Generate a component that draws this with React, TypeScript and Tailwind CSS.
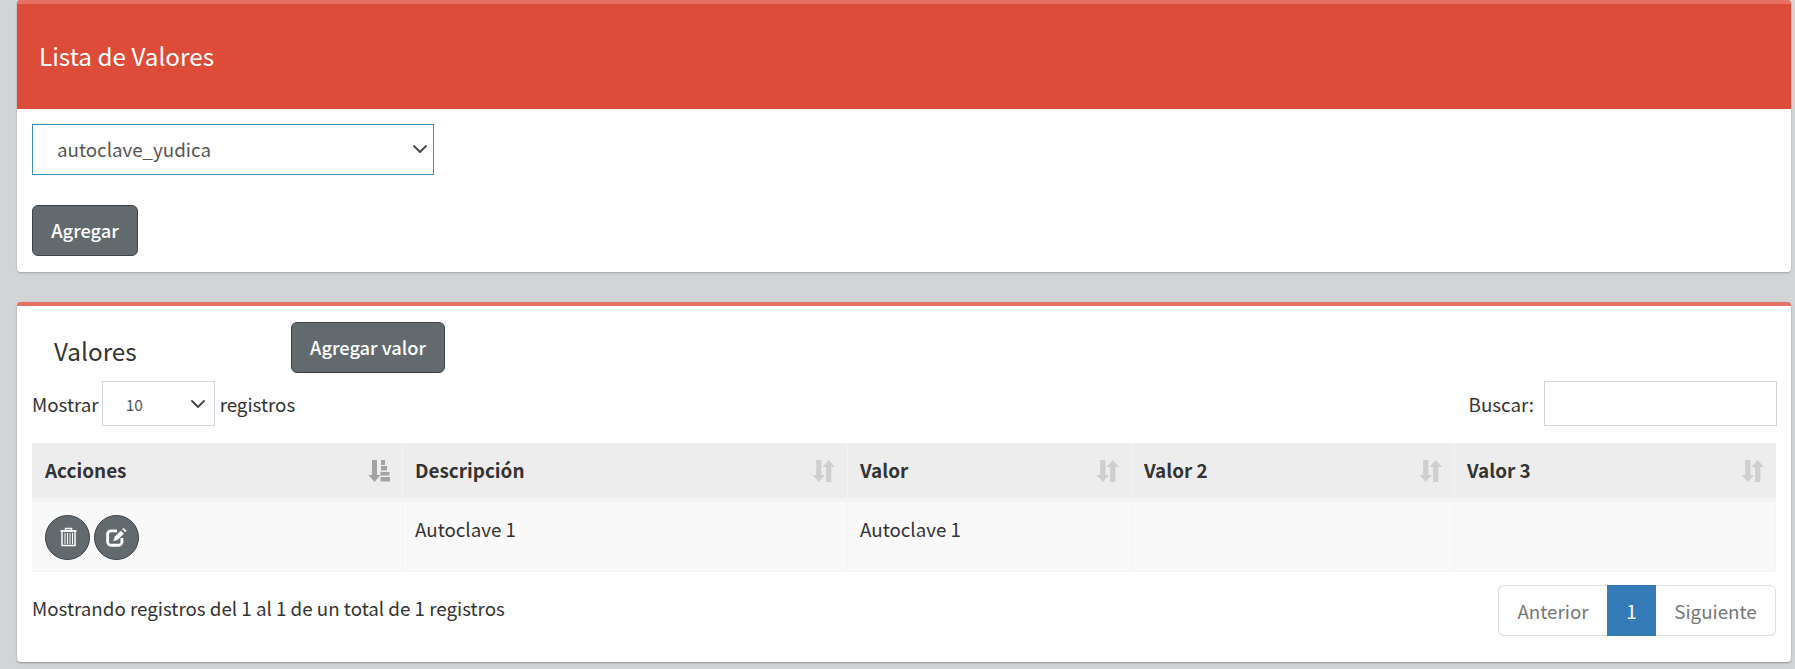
import { ChevronDown } from 'lucide-react';

const FONT = "font-['Noto_Sans_CJK_JP','Source_Sans_Pro',sans-serif]";

function SortBoth() {
  return (
    <svg width="23" height="24" viewBox="0 0 22 24" preserveAspectRatio="none" className="text-[#cfcfcf]" fill="currentColor">
      <path d="M4 1h5v15h3.5L6.5 23 .5 16H4z" />
      <path d="M16 1l6 7h-3.500v15h-5V8H10z" />
    </svg>
  );
}

function SortAsc() {
  return (
    <svg width="22" height="24" viewBox="0 0 22 24" className="text-[#a3a3a3]" fill="currentColor">
      <path d="M4 1h5v15h3.500L6.500 23 .5 16H4z" />
      <rect x="13" y="1" width="4" height="5" />
      <rect x="13" y="7" width="6" height="4.500" />
      <rect x="12.500" y="13" width="9" height="3.500" />
      <rect x="12.500" y="18" width="9.500" height="4.500" />
    </svg>
  );
}

function TrashIcon() {
  return (
    <svg width="17" height="20" viewBox="0 0 17 20" fill="none" stroke="white" className="ml-[2px]">
      <path d="M0.500 4h16" strokeWidth="2" />
      <path d="M5.500 3.500V1.500h6v2" strokeWidth="1.500" />
      <path d="M2 5v13.500h13V5" strokeWidth="1.500" />
      <path d="M5 6v11M7.500 6v11M10 6v11M12.500 6v11" strokeWidth="1" />
    </svg>
  );
}

function EditIcon() {
  return (
    <svg width="22" height="21" viewBox="0 0 20 19" fill="none" stroke="white" className="ml-[1px]">
      <path d="M10 3.500H4.500a3 3 0 0 0-3 3v7a3 3 0 0 0 3 3h7a3 3 0 0 0 3-3V10" strokeWidth="2.600" />
      <path d="M7 12.500l1-3.500 5.500-5.500 2.500 2.500-5.500 5.500z" fill="white" strokeWidth="0.500" />
      <path d="M15 2l1-1 2.500 2.500-1 1z" fill="white" strokeWidth="0.500" />
    </svg>
  );
}

const COLUMNS = [
  { name: 'Acciones', width: 'w-[370px]', pad: 'pl-[13px] pr-[12px]', icon: <SortAsc /> },
  { name: 'Descripción', width: 'w-[445px]', pad: 'pl-[12px] pr-[12px]', icon: <SortBoth /> },
  { name: 'Valor', width: 'w-[284px]', pad: 'pl-[12px] pr-[12px]', icon: <SortBoth /> },
  { name: 'Valor 2', width: 'w-[323px]', pad: 'pl-[12px] pr-[12px]', icon: <SortBoth /> },
  { name: 'Valor 3', width: 'w-[322px]', pad: 'pl-[12px] pr-[12px]', icon: <SortBoth /> },
];

function GrayButton({ label, className }: { label: string; className: string }) {
  return (
    <button className={`h-[51px] rounded-[6px] border border-[#3b4347] bg-[#636a6e] pb-[2px] text-[18.300px] leading-[24px] font-medium text-white ${className}`}>
      {label}
    </button>
  );
}

export default function App() {
  return (
    <div className={`min-h-screen bg-[#d3d4d6] pl-[17px] pr-[4px] text-[18.75px] leading-[24px] text-[#333333] ${FONT}`}>
      <section className="h-[272px] overflow-hidden rounded-[4px] bg-white shadow-[0_1px_2px_rgba(0,0,0,0.25)]">
        <div className="border-t-[4px] border-[#e57063] bg-[#dd4b39] pb-[35px] pl-[22px] pt-[34px] text-[24.300px] leading-[36px] text-white">
          Lista de Valores
        </div>
        <div className="px-[15px]">
          <div className="relative mt-[15px] flex h-[51px] w-[402px] items-center border border-[#3c8dbc] pb-[2px] pl-[24px] text-[#555555]">
            autoclave_yudica
            <ChevronDown className="absolute right-[1px] top-[12px] h-[24px] w-[24px] text-[#444444]" strokeWidth={1.8} />
          </div>
          <GrayButton label="Agregar" className="mt-[30px] w-[106px]" />
        </div>
      </section>

      <section className="mt-[30px] h-[360px] rounded-[4px] border-t-[4px] border-[#e57063] bg-white px-[15px] shadow-[0_1px_2px_rgba(0,0,0,0.35)]">
        <div className="flex items-start pt-[16px]">
          <h3 className="mt-[13px] w-[259px] pl-[22px] text-[24.300px] leading-[32px] font-normal">Valores</h3>
          <GrayButton label="Agregar valor" className="w-[154px]" />
        </div>

        <div className="mt-[8px] -mr-[1px] flex h-[45px] items-start justify-between">
          <div className="flex items-center">
            <span className="mr-[3px]">Mostrar</span>
            <div className="relative flex h-[45px] w-[113px] items-center border border-[#d2d6de] pl-[23px] text-[15.500px] text-[#555555]">
              10
              <ChevronDown className="absolute right-[4px] top-[10px] h-[24px] w-[24px] text-[#444444]" strokeWidth={1.8} />
            </div>
            <span className="ml-[5px]">registros</span>
          </div>
          <div className="flex items-center">
            <span className="mr-[10px]">Buscar:</span>
            <input className="h-[45px] w-[233px] border border-[#d2d6de] bg-white outline-none" />
          </div>
        </div>

        <table className="mt-[17px] table-fixed border-separate border-spacing-0">
          <thead>
            <tr>
              {COLUMNS.map((col, i) => (
                <th
                  key={col.name}
                  className={`${col.width} h-[59px] border-b-[4px] border-[#f4f4f4] bg-[#ededed] p-0 text-left ${i > 0 ? 'border-l' : ''}`}
                >
                  <div className={`flex items-center justify-between ${col.pad} text-[18.900px] font-bold`}>
                    <span className="pb-[2px]">{col.name}</span>
                    {col.icon}
                  </div>
                </th>
              ))}
            </tr>
          </thead>
          <tbody>
            <tr>
              <td className="h-[70px] border-b border-[#f4f4f4] bg-[#f9f9f9] pl-[13px] align-middle">
                <div className="flex gap-[4px] pt-[1px]">
                  <button className="flex h-[45px] w-[45px] items-center justify-center rounded-full border border-[#3b4347] bg-[#636a6e]">
                    <TrashIcon />
                  </button>
                  <button className="flex h-[45px] w-[45px] items-center justify-center rounded-full border border-[#3b4347] bg-[#636a6e]">
                    <EditIcon />
                  </button>
                </div>
              </td>
              <td className="border-b border-l border-[#f4f4f4] bg-[#f9f9f9] pl-[12px] pt-[15px] align-top">Autoclave 1</td>
              <td className="border-b border-l border-[#f4f4f4] bg-[#f9f9f9] pl-[12px] pt-[15px] align-top">Autoclave 1</td>
              <td className="border-b border-l border-[#f4f4f4] bg-[#f9f9f9]" />
              <td className="border-b border-l border-r border-[#f4f4f4] bg-[#f9f9f9]" />
            </tr>
          </tbody>
        </table>

        <div className="mt-[13px] flex items-start justify-between">
          <span className="pt-[11px]">Mostrando registros del 1 al 1 de un total de 1 registros</span>
          <div className="flex h-[51px] items-stretch text-[#777777]">
            <span className="flex w-[109px] items-center justify-center rounded-l-[6px] border border-r-0 border-[#dddddd] bg-white">Anterior</span>
            <span className="flex w-[49px] items-center justify-center bg-[#337ab7] text-white">1</span>
            <span className="flex w-[120px] items-center justify-center rounded-r-[6px] border border-l-0 border-[#dddddd] bg-white">Siguiente</span>
          </div>
        </div>
      </section>
    </div>
  );
}
